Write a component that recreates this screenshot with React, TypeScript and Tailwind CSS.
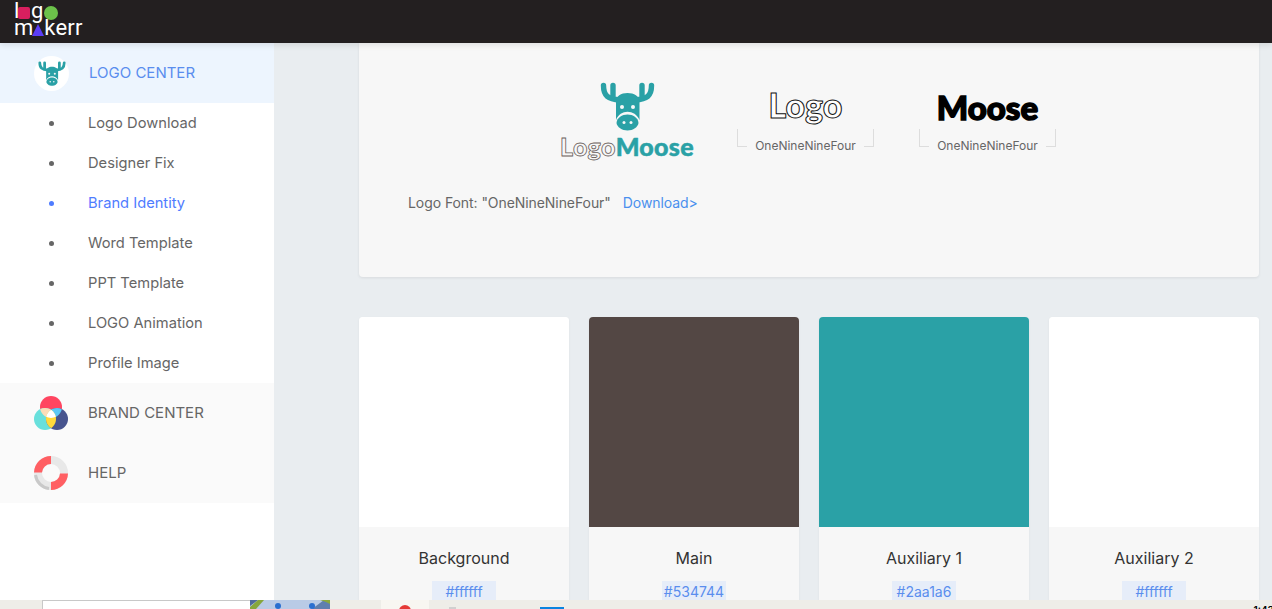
import React from 'react'

const MooseHead = ({ className }: { className?: string }) => (
  <svg viewBox="0 0 55 49" className={className}>
    <g fill="none" stroke="#2aa1a6" strokeWidth="5.400" strokeLinecap="round" strokeLinejoin="round">
      <path d="M3.500 3.500 C3.500 14 8 17 20 18" />
      <path d="M13 3.500 V14" />
      <path d="M51.500 3.500 C51.500 14 47 17 35 18" />
      <path d="M42 3.500 V14" />
    </g>
    <path d="M16 20 C16 14 21 11 27.500 11 C34 11 39.500 14 39.500 20 V38 C35 27 20 27 16 38 Z" fill="#2aa1a6" />
    <path d="M16.500 41 C17 35.500 22 32.500 27.500 32.500 C33 32.500 38 35.500 38.500 41 C38 45 33 48.500 27.500 48.500 C22 48.500 17 45 16.500 41 Z" fill="#2aa1a6" />
    <circle cx="22" cy="25" r="2" fill="#f7f7f7" />
    <circle cx="33" cy="25" r="2" fill="#f7f7f7" />
    <circle cx="24" cy="40.500" r="1.500" fill="#f7f7f7" />
    <circle cx="31" cy="40.500" r="1.500" fill="#f7f7f7" />
  </svg>
)

const BrandIcon = () => (
  <svg viewBox="0 0 34 34" className="w-[34px] h-[34px]">
    <defs>
      <clipPath id="brand-top"><circle cx="17" cy="11" r="11" /></clipPath>
      <clipPath id="brand-left"><circle cx="11" cy="23" r="11" /></clipPath>
      <clipPath id="brand-right"><circle cx="23" cy="23" r="11" /></clipPath>
    </defs>
    <circle cx="17" cy="11" r="11" fill="#ff4560" />
    <circle cx="11" cy="23" r="11" fill="#68e0dc" />
    <circle cx="23" cy="23" r="11" fill="#47548e" />
    <g clipPath="url(#brand-top)"><circle cx="11" cy="23" r="11" fill="#fbdcb8" /></g>
    <g clipPath="url(#brand-top)"><circle cx="23" cy="23" r="11" fill="#5cc8f5" /></g>
    <g clipPath="url(#brand-left)"><circle cx="23" cy="23" r="11" fill="#ffd93b" /></g>
    <g clipPath="url(#brand-left)"><g clipPath="url(#brand-right)"><circle cx="17" cy="11" r="11" fill="#ffffff" /></g></g>
  </svg>
)

const HelpIcon = () => (
  <svg viewBox="0 0 34 34" className="w-[34px] h-[34px]">
    <circle cx="17" cy="17" r="13" fill="none" stroke="#e8e8e8" strokeWidth="8" />
    <path d="M1.500 19 A15.500 15.500 0 0 0 15 32.500" fill="none" stroke="#c9c9c9" strokeWidth="3" />
    <path d="M0 16.500 A17 17 0 0 1 17 0 L17 8 A9 9 0 0 0 8 16.500 Z" fill="#ff5f63" />
    <path d="M34 17.500 A17 17 0 0 1 17 34 L17 26 A9 9 0 0 0 26 17.500 Z" fill="#ff5f63" />
  </svg>
)

const subItems = ['Logo Download', 'Designer Fix', 'Brand Identity', 'Word Template', 'PPT Template', 'LOGO Animation', 'Profile Image']

const swatches = [
  { label: 'Background', hex: '#ffffff', box: 'bg-white' },
  { label: 'Main', hex: '#534744', box: 'bg-[#534744]' },
  { label: 'Auxiliary 1', hex: '#2aa1a6', box: 'bg-[#2aa1a6]' },
  { label: 'Auxiliary 2', hex: '#ffffff', box: 'bg-white' },
]

const FontSample = ({ children }: { children: React.ReactNode }) => (
  <div className="flex flex-col items-center w-[137px]">
    <div className="h-[46px] flex items-center justify-center">{children}</div>
    <div className="relative w-full h-[20px] mt-[2px] flex items-end justify-center">
      <span className="absolute left-0 top-0 w-[10px] h-[18px] border-l border-b border-[#dddddd]" />
      <span className="absolute right-0 top-0 w-[10px] h-[18px] border-r border-b border-[#dddddd]" />
      <span className="text-[12px] leading-[16px] text-[#666666] translate-y-[5px]">OneNineNineFour</span>
    </div>
  </div>
)

export default function App() {
  return (
    <div className="w-[1272px] h-[609px] flex flex-col overflow-hidden bg-[#e9edf0] font-['Inter',sans-serif]">
      <header className="h-[43px] shrink-0 bg-[#231f20] pl-[14px] pt-[2px] shadow-[0_2px_6px_rgba(0,0,0,0.1)] z-10">
        <div className="w-[70px] text-white text-[22px] leading-[17px] font-['Roboto',sans-serif]">
          <div className="flex items-center h-[17px]">
            <span className="w-[3px]">l</span>
            <span className="w-[12px] h-[12px] rounded-[2px] bg-[#d81f5f] ml-[1px] mt-[5px]" />
            <span className="ml-[1px]">g</span>
            <span className="w-[14px] h-[14px] rounded-full bg-[#6cc24a] ml-[1px] mt-[5px]" />
          </div>
          <div className="flex items-center h-[17px]">
            <span>m</span>
            <span className="w-0 h-0 border-l-[6.500px] border-r-[6.500px] border-b-[12px] border-l-transparent border-r-transparent border-b-[#5b3df5] mt-[4px] -ml-[1px]" />
            <span className="tracking-[0.2px]">kerr</span>
          </div>
        </div>
      </header>

      <div className="flex-1 flex min-h-0">
        <aside className="w-[274px] shrink-0 bg-white text-[15px]">
          <div className="h-[60px] bg-[#edf5fe] flex items-center pl-[34px]">
            <div className="w-[35px] h-[35px] rounded-full bg-white flex items-center justify-center">
              <MooseHead className="w-[28px] h-[25px]" />
            </div>
            <span className="ml-[20px] text-[#5a8dee]">LOGO CENTER</span>
          </div>
          {subItems.map(item => (
            <div key={item} className={`h-[40px] flex items-center pl-[49px] text-[14.7px] ${item === 'Brand Identity' ? 'text-[#4f7cff]' : 'text-[#666666]'}`}>
              <span className={`w-[5px] h-[5px] rounded-full ${item === 'Brand Identity' ? 'bg-[#4f7cff]' : 'bg-[#666666]'}`} />
              <span className="ml-[34px]">{item}</span>
            </div>
          ))}
          <div className="bg-[#fafafa]">
            <div className="h-[60px] flex items-center pl-[34px]">
              <BrandIcon />
              <span className="ml-[20px] text-[#666666]">BRAND CENTER</span>
            </div>
            <div className="h-[60px] flex items-center pl-[34px]">
              <HelpIcon />
              <span className="ml-[20px] text-[#666666]">HELP</span>
            </div>
          </div>
        </aside>

        <main className="flex-1 min-w-0 pl-[85px] pr-[13px]">
          <section className="h-[234px] bg-[#f7f7f7] rounded-b-[4px] shadow-[0_1px_3px_rgba(0,0,0,0.08)] pl-[49px]">
            <div className="flex pt-[39px] pl-[153px]">
              <div className="w-[132px] flex flex-col items-center">
                <MooseHead className="w-[55px] h-[49px]" />
                <div className="flex items-baseline text-[25px] leading-[28px] font-black font-['Lato',sans-serif] mt-[1px] tracking-[0.3px]">
                  <span className="text-[#f7f7f7] [-webkit-text-stroke:0.8px_#6b5f5c]">Logo</span>
                  <span className="text-[#2aa1a6] [-webkit-text-stroke:0.5px_#2aa1a6]">Moose</span>
                </div>
              </div>
              <div className="ml-[44px] -mt-[1px]">
                <FontSample>
                  <span className="text-[34px] leading-[36px] font-black font-['Lato',sans-serif] text-white [-webkit-text-stroke:1px_#111111] translate-y-[1px]">Logo</span>
                </FontSample>
              </div>
              <div className="ml-[45px] -mt-[1px]">
                <FontSample>
                  <span className="text-[33px] leading-[36px] font-black font-['Lato',sans-serif] text-black [-webkit-text-stroke:1.500px_#000000] translate-y-[3px]">Moose</span>
                </FontSample>
              </div>
            </div>
            <div className="mt-[33px] text-[14px] leading-[20px] text-[#666666] tracking-[-0.07px]">
              Logo Font: "OneNineNineFour"
              <span className="ml-[12px] text-[#4a90ee]">Download&gt;</span>
            </div>
          </section>

          <section className="mt-[40px] grid grid-cols-4 gap-[20px]">
            {swatches.map((s, i) => (
              <div key={i} className="rounded-[4px] overflow-hidden bg-[#f7f7f7] h-[290px] shadow-[0_1px_3px_rgba(0,0,0,0.05)]">
                <div className={`h-[210px] ${s.box}`} />
                <div className="pt-[21px] flex flex-col items-center">
                  <div className="text-[16px] leading-[20px] text-[#333333]">{s.label}</div>
                  <div className="mt-[13px] w-[64px] text-center bg-[#e6edf9] text-[14px] leading-[21px] text-[#5a8dee]">{s.hex}</div>
                </div>
              </div>
            ))}
          </section>
        </main>
      </div>

      <footer className="h-[9px] shrink-0 bg-[#eeede8] flex z-10 relative overflow-hidden">
        <div className="ml-[42px] w-[208px] bg-white border-t border-l border-[#c8c8c8]" />
        <svg viewBox="0 0 80 9" className="w-[80px] h-[9px]">
          <rect width="80" height="9" fill="#b9cbe6" />
          <path d="M0 0 H8 L0 6 Z" fill="#4f6a9a" />
          <path d="M8 0 H14 L6 9 H0 V7 Z" fill="#86a63c" />
          <path d="M62 9 L74 0 H80 V9 Z" fill="#5f7fae" />
          <path d="M70 0 H80 V4 L76 2 Z" fill="#8aa83c" />
          <circle cx="28" cy="6" r="3" fill="#2a6fd0" />
          <circle cx="62" cy="6" r="3" fill="#2a6fd0" />
        </svg>
        <div className="ml-[51px] w-[48px] bg-[#f8f6f1] flex justify-center">
          <span className="w-[12px] h-[12px] rounded-full bg-[#e53935] mt-[5px]" />
        </div>
        <div className="ml-[20px] w-[7px] h-[9px] mt-[7px] bg-[#d0d0d0]" />
        <div className="ml-[84px] w-[24px] h-[9px] mt-[7px] bg-[#0a84e0]" />
        <span className="absolute right-[-2px] top-[5px] text-[10px] leading-[10px] font-semibold text-black">1:43</span>
      </footer>
    </div>
  )
}
